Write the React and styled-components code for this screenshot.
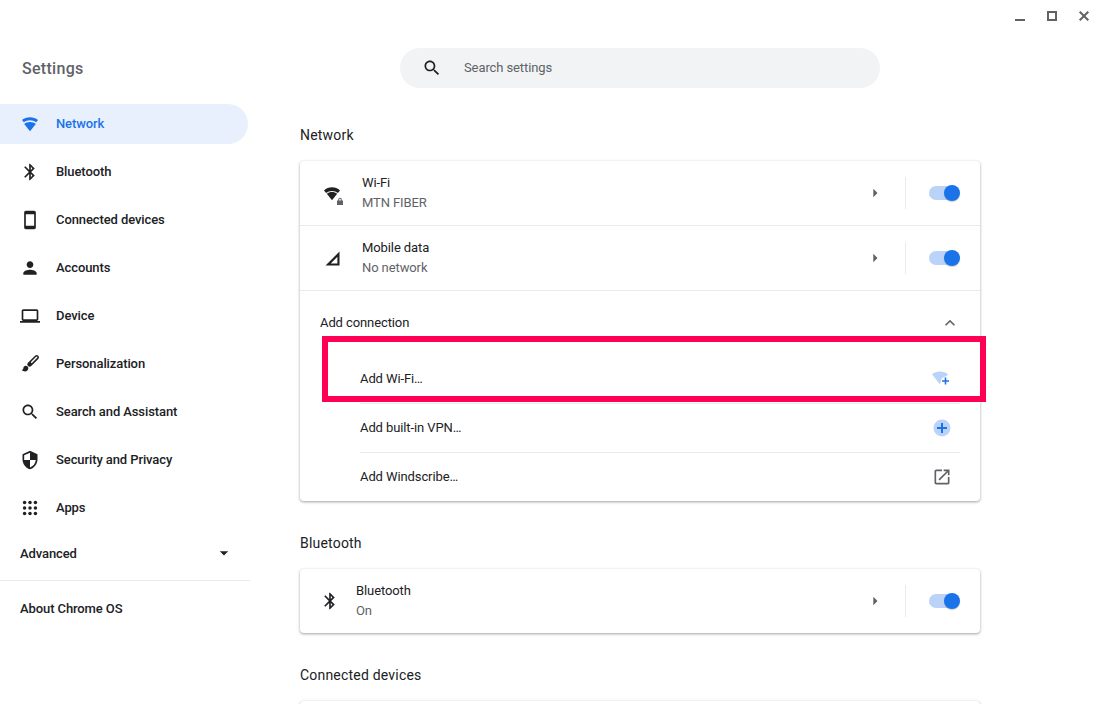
import React from "react";
import styled, { createGlobalStyle } from "styled-components";

const GlobalStyle = createGlobalStyle`
  html, body {
    margin: 0;
    padding: 0;
    background: #fff;
    overflow: hidden;
  }
  body {
    font-family: Roboto, "Liberation Sans", sans-serif;
    color: #202124;
    letter-spacing: -0.1px;
  }
`;

const Page = styled.div`
  width: 1100px;
  height: 704px;
  overflow: hidden;
  display: flex;
  flex-direction: column;
`;

const TitleBar = styled.div`
  height: 32px;
  flex: none;
  display: flex;
  justify-content: flex-end;
  align-items: center;
  gap: 8px;
`;

const WinButton = styled.div`
  width: 24px;
  height: 32px;
  display: flex;
  align-items: center;
  justify-content: center;
  margin-right: ${props => props.last ? "4px" : "0"};
`;

const Body = styled.div`
  display: flex;
  flex: 1;
  min-height: 0;
`;

const Sidebar = styled.nav`
  width: 250px;
  flex: none;
`;

const AppTitle = styled.div`
  height: 72px;
  padding-left: 22px;
  padding-top: 26px;
  box-sizing: border-box;
  font-size: 16px;
  line-height: 22px;
  font-weight: 500;
  letter-spacing: 0.3px;
  color: #5f6368;
`;

const NavList = styled.div`
  display: flex;
  flex-direction: column;
  gap: 8px;
`;

const NavItem = styled.div`
  width: 248px;
  height: 40px;
  box-sizing: border-box;
  display: flex;
  align-items: center;
  padding-left: 20px;
  border-radius: 0 20px 20px 0;
  font-size: 13px;
  font-weight: 500;
  background: ${props => props.active ? "#e8f0fe" : "transparent"};
  color: ${props => props.active ? "#1a73e8" : "#202124"};
`;

const NavIcon = styled.span`
  width: 20px;
  height: 20px;
  margin-right: 16px;
  display: flex;
  align-items: center;
  justify-content: center;
`;

const Label = styled.span`
  margin-top: -2px;
`;

const AdvancedRow = styled.div`
  height: 20px;
  margin-top: 15px;
  padding: 0 16px 0 20px;
  display: flex;
  align-items: center;
  justify-content: space-between;
  font-size: 13px;
  font-weight: 500;
`;

const SideDivider = styled.div`
  height: 1px;
  margin-top: 17px;
  background: #e8eaed;
`;

const AboutRow = styled.div`
  margin-top: 19px;
  padding-left: 20px;
  font-size: 13px;
  line-height: 18px;
  font-weight: 500;
`;

const Main = styled.main`
  width: 680px;
  margin-left: 50px;
  flex: none;
`;

const SearchBox = styled.div`
  width: 480px;
  height: 40px;
  margin: 16px auto 0;
  border-radius: 20px;
  background: #f1f3f4;
  display: flex;
  align-items: center;
  padding-left: 22px;
  box-sizing: border-box;
  font-size: 13px;
  color: #5f6368;
`;

const SearchIcon = styled.span`
  display: flex;
  margin-right: 22px;
`;

const SectionTitle = styled.h2`
  margin: ${props => props.top} 0 0;
  height: 20px;
  font-size: 14px;
  line-height: 20px;
  font-weight: 400;
  letter-spacing: 0.2px;
  color: #202124;
`;

const Card = styled.section`
  margin-top: 16px;
  background: #fff;
  border-radius: 4px;
  box-shadow: 0 1px 2px rgba(60, 64, 67, 0.3), 0 1px 3px 1px rgba(60, 64, 67, 0.15);
`;

const Row = styled.div`
  height: ${props => props.tall ? "65px" : "64px"};
  box-sizing: border-box;
  display: flex;
  align-items: center;
  padding: 0 20px;
  border-bottom: ${props => props.tall ? "1px solid #e8eaed" : "none"};
`;

const RowIcon = styled.span`
  width: 24px;
  height: 24px;
  margin-left: ${props => props.shift || "0"};
  margin-right: ${props => props.gap || "18px"};
  display: flex;
  align-items: center;
  justify-content: center;
`;

const RowText = styled.div`
  flex: 1;
  font-size: 13px;
  line-height: 20px;
`;

const Secondary = styled.div`
  color: #5f6368;
`;

const Arrow = styled.span`
  display: flex;
  margin-right: 20px;
`;

const VLine = styled.div`
  width: 1px;
  height: 32px;
  background: #e8eaed;
  margin-right: 23px;
`;

const Toggle = styled.div`
  position: relative;
  width: 28px;
  height: 14px;
  border-radius: 7px;
  margin-right: 3px;
  background: #bbd3f8;
`;

const Knob = styled.div`
  position: absolute;
  right: -3px;
  top: -1px;
  width: 16px;
  height: 16px;
  border-radius: 50%;
  background: #1a73e8;
  box-shadow: 0 1px 1px rgba(60, 64, 67, 0.25);
`;

const AddHeader = styled.div`
  height: 64px;
  padding: 0 20px;
  display: flex;
  align-items: center;
  justify-content: space-between;
  font-size: 13px;
`;

const AddList = styled.div`
  margin-left: 60px;
  margin-right: 20px;
  margin-top: -1px;
`;

const AddRow = styled.div`
  height: 49px;
  box-sizing: border-box;
  display: flex;
  align-items: center;
  justify-content: space-between;
  padding-right: 8px;
  font-size: 13px;
  border-top: ${props => props.line ? "1px solid #e8eaed" : "none"};
`;

const Annotation = styled.div`
  position: absolute;
  left: 322px;
  top: 336px;
  width: 664px;
  height: 66px;
  box-sizing: border-box;
  border: 6px solid #ff0055;
  pointer-events: none;
`;

const Icon = ({ d, size = 20, color = "#202124" }) => (
  <svg width={size} height={size} viewBox="0 0 24 24" fill={color}><path d={d} /></svg>
);

const WifiIcon = ({ color }) => (
  <svg width="20" height="20" viewBox="0 0 20 20" fill={color}>
    <path d="M10 17.200 4.200 10C5.800 8.800 7.800 8.100 10 8.100s4.200.7 5.800 1.900L10 17.200z" />
    <path d="M2 6C4.200 4.100 7 3.200 10 3.200s5.800.9 8 2.800l-1.800 2.300C14.500 7 12.300 6.300 10 6.300s-4.500.7-6.200 2L2 6z" />
  </svg>
);

const BrushIcon = () => (
  <svg width="20" height="20" viewBox="0 0 24 24" fill="#202124">
    <path d="M7 14c-1.660 0-3 1.340-3 3 0 1.310-1.160 2-2 2 .92 1.220 2.490 2 4 2 2.210 0 4-1.790 4-4 0-1.660-1.340-3-3-3z" />
    <path d="M11.500 12.500 20 4" stroke="#202124" strokeWidth="5.500" strokeLinecap="round" />
    <path d="M14 10 20 4" stroke="#fff" strokeWidth="1.800" strokeLinecap="round" />
  </svg>
);

const paths = {
  bluetooth: "M17.71 7.71L12 2h-1v7.59L6.41 5 5 6.41 10.59 12 5 17.59 6.41 19 11 14.41V22h1l5.71-5.710-4.3-4.290 4.3-4.290zM13 5.830l1.880 1.880L13 9.590V5.830zm1.880 10.460L13 18.170v-3.760l1.880 1.880z",
  phone: "M17 1.010L7 1c-1.100 0-2 .9-2 2v18c0 1.100.9 2 2 2h10c1.100 0 2-.9 2-2V3c0-1.100-.9-1.990-2-1.990zM17 19H7V5h10v14z",
  person: "M12 12c2.210 0 4-1.790 4-4s-1.790-4-4-4-4 1.790-4 4 1.790 4 4 4zm0 2c-2.670 0-8 1.340-8 4v2h16v-2c0-2.660-5.330-4-8-4z",
  laptop: "M20 18c1.100 0 1.990-.9 1.990-2L22 6c0-1.100-.9-2-2-2H4c-1.100 0-2 .9-2 2v10c0 1.100.9 2 2 2H0v2h24v-2h-4zM4 6h16v10H4V6z",
  search: "M15.500 14h-.79l-.28-.27C15.410 12.590 16 11.110 16 9.500 16 5.910 13.090 3 9.500 3S3 5.910 3 9.500 5.910 16 9.500 16c1.610 0 3.090-.59 4.230-1.570l.27.28v.79l5 4.990L20.490 19l-4.990-5zm-6 0C7.010 14 5 11.990 5 9.500S7.010 5 9.500 5 14 7.010 14 9.500 11.990 14 9.500 14z",
  shield: "M12 1L3 5v6c0 5.550 3.840 10.740 9 12 5.160-1.260 9-6.450 9-12V5l-9-4zm0 10.990h7c-.53 4.120-3.280 7.790-7 8.940V12H5V6.300l7-3.110v8.800z",
  drop: "M7 10l5 5 5-5z",
  right: "M10 17l5-5-5-5v10z",
  open: "M19 19H5V5h7V3H5c-1.110 0-2 .9-2 2v14c0 1.100.89 2 2 2h14c1.100 0 2-.9 2-2v-7h-2v7zM14 3v2h3.590l-9.830 9.830 1.410 1.410L19 6.410V10h2V3h-7z",
  less: "M12 8l-6 6 1.410 1.410L12 10.830l4.590 4.580L18 14z",
};

const AppsIcon = () => (
  <svg width="20" height="20" viewBox="0 0 24 24" fill="#202124">
    {[5.5, 12, 18.5].flatMap(y => [5.5, 12, 18.500].map(x => <circle key={x + "-" + y} cx={x} cy={y} r="2.100" />))}
  </svg>
);

const LockedWifi = () => (
  <svg width="24" height="24" viewBox="0 0 24 24">
    <path fill="#202124" d="M12 19.200 6.800 12.700C8.200 11.700 10 11.100 12 11.100s3.800.6 5.200 1.600L12 19.200z" />
    <path fill="#202124" d="M4 9.400C6.200 7.400 9 6.200 12 6.200s5.800 1.200 8 3.200l-2.100 2.500C16.300 10.600 14.200 9.900 12 9.900s-4.300.7-5.900 2L4 9.400z" />
    <path fill="#5f6368" d="M17 19.500h6V24h-6zM18.200 19.500v-.9a1.800 1.800 0 0 1 3.600 0v.9h-1v-.9a.8.8 0 0 0-1.600 0v.9z" />
  </svg>
);

const SignalIcon = () => (
  <svg width="24" height="24" viewBox="0 0 24 24" fill="#202124">
    <path fillRule="evenodd" d="M5.500 19.500 19.500 5.500v14h-14zm5.200-2.100h6.700v-6.700l-6.700 6.700z" />
  </svg>
);

const AddWifiIcon = () => (
  <svg width="20" height="20" viewBox="0 0 20 20">
    <path fill="#bbd3f8" d="M0 5.200C2.200 3.400 5 2.500 8 2.500s5.800.9 8 2.700l-2 2.400A5 5 0 0 0 8.800 13.400L7.500 15 0 5.200z" />
    <path fill="#1a73e8" d="M12.700 8.500h1.600v2.700H17v1.600h-2.700v2.700h-1.600v-2.700H10v-1.600h2.700z" />
  </svg>
);

const AddCircleIcon = () => (
  <svg width="20" height="20" viewBox="0 0 20 20">
    <circle cx="10" cy="10" r="8.500" fill="#bbd3f8" />
    <path fill="#1a73e8" d="M9 5h2v4h4v2h-4v4H9v-4H5V9h4z" />
  </svg>
);

const navItems = [
  { label: "Bluetooth", icon: <Icon d={paths.bluetooth} /> },
  { label: "Connected devices", icon: <Icon d={paths.phone} size={22} /> },
  { label: "Accounts", icon: <Icon d={paths.person} /> },
  { label: "Device", icon: <Icon d={paths.laptop} /> },
  { label: "Personalization", icon: <BrushIcon /> },
  { label: "Search and Assistant", icon: <Icon d={paths.search} /> },
  { label: "Security and Privacy", icon: <Icon d={paths.shield} /> },
  { label: "Apps", icon: <AppsIcon /> },
];

const ToggleControl = () => (
  <>
    <Arrow><Icon d={paths.right} size={20} color="#5f6368" /></Arrow>
    <VLine />
    <Toggle><Knob /></Toggle>
  </>
);

const App = () => {
  return (
    <Page>
      <GlobalStyle />
      <TitleBar>
        <WinButton>
          <svg width="16" height="16" viewBox="0 0 16 16" fill="#5f6368"><path d="M3 11h10v2H3z" /></svg>
        </WinButton>
        <WinButton>
          <svg width="16" height="16" viewBox="0 0 16 16" fill="#5f6368"><path fillRule="evenodd" d="M3 3h10v10H3zm2 2v6h6V5z" /></svg>
        </WinButton>
        <WinButton last>
          <svg width="16" height="16" viewBox="0 0 16 16" fill="#5f6368"><path d="M4.400 3 8 6.600 11.600 3 13 4.400 9.400 8l3.600 3.600-1.400 1.400L8 9.400 4.400 13 3 11.600 6.600 8 3 4.400z" /></svg>
        </WinButton>
      </TitleBar>
      <Body>
        <Sidebar>
          <AppTitle>Settings</AppTitle>
          <NavList>
            <NavItem active>
              <NavIcon><WifiIcon color="#1a73e8" /></NavIcon>
              <Label>Network</Label>
            </NavItem>
            {navItems.map(item => (
              <NavItem key={item.label}>
                <NavIcon>{item.icon}</NavIcon>
                <Label>{item.label}</Label>
              </NavItem>
            ))}
          </NavList>
          <AdvancedRow>
            Advanced
            <Icon d={paths.drop} size={20} color="#202124" />
          </AdvancedRow>
          <SideDivider />
          <AboutRow>About Chrome OS</AboutRow>
        </Sidebar>
        <Main>
          <SearchBox>
            <SearchIcon><Icon d={paths.search} size={20} color="#202124" /></SearchIcon>
            <Label>Search settings</Label>
          </SearchBox>
          <SectionTitle top="37px">Network</SectionTitle>
          <Card>
            <Row tall>
              <RowIcon><LockedWifi /></RowIcon>
              <RowText>
                Wi-Fi
                <Secondary>MTN FIBER</Secondary>
              </RowText>
              <ToggleControl />
            </Row>
            <Row tall>
              <RowIcon><SignalIcon /></RowIcon>
              <RowText>
                Mobile data
                <Secondary>No network</Secondary>
              </RowText>
              <ToggleControl />
            </Row>
            <AddHeader>
              <Label>Add connection</Label>
              <Icon d={paths.less} size={20} color="#5f6368" />
            </AddHeader>
            <AddList>
              <AddRow>
                Add Wi-Fi…
                <AddWifiIcon />
              </AddRow>
              <AddRow line>
                <Label>Add built-in VPN…</Label>
                <AddCircleIcon />
              </AddRow>
              <AddRow line>
                <Label>Add Windscribe…</Label>
                <Icon d={paths.open} size={20} color="#5f6368" />
              </AddRow>
            </AddList>
          </Card>
          <SectionTitle top="32px">Bluetooth</SectionTitle>
          <Card>
            <Row>
              <RowIcon shift="-2px" gap="14px"><Icon d={paths.bluetooth} size={20} /></RowIcon>
              <RowText>
                Bluetooth
                <Secondary>On</Secondary>
              </RowText>
              <ToggleControl />
            </Row>
          </Card>
          <SectionTitle top="32px">Connected devices</SectionTitle>
          <Card>
            <Row />
          </Card>
        </Main>
      </Body>
      <Annotation />
    </Page>
  );
};

export default App;
